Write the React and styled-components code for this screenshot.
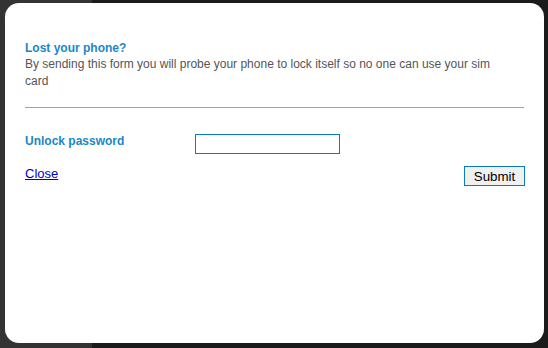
import styled, { createGlobalStyle } from 'styled-components';

const GlobalStyle = createGlobalStyle`
  html, body {
    margin: 0;
    padding: 0;
  }
  body {
    width: 548px;
    height: 348px;
    overflow: hidden;
    background: linear-gradient(to right, #333333 0px, #333333 92px, #1b1b1b 92px, #1b1b1b 100%);
    font-family: "Liberation Sans", Arial, sans-serif;
  }
`;

const Backdrop = styled.div`
  width: 548px;
  height: 348px;
  padding: 3px 4px 5px 5px;
  box-sizing: border-box;
`;

const Modal = styled.div`
  width: 539px;
  height: 340px;
  box-sizing: border-box;
  background: #ffffff;
  border-radius: 14px;
  padding: 38px 20px 0 20px;
  display: flex;
  flex-direction: column;
`;

const Title = styled.div`
  font-size: 12px;
  line-height: 15px;
  font-weight: bold;
  color: #1a87c7;
`;

const Intro = styled.p`
  margin: 0;
  max-width: 484px;
  font-size: 12px;
  line-height: 17px;
  color: #555558;
`;

const Divider = styled.hr`
  margin: 17px 0 0 0;
  border: 0;
  height: 1px;
  background: #a0a0a0;
`;

const FieldRow = styled.div`
  display: flex;
  align-items: flex-start;
  margin-top: 26px;
`;

const Label = styled.label`
  width: 170px;
  font-size: 12px;
  line-height: 15px;
  font-weight: bold;
  color: #1a87c7;
`;

const TextInput = styled.input`
  width: 145px;
  height: 20px;
  box-sizing: border-box;
  margin: 0;
  padding: 0 3px;
  border: 1px solid #0a7bbf;
  background: #fff;
  font-size: 12px;
  outline: none;
`;

const Actions = styled.div`
  display: flex;
  justify-content: space-between;
  align-items: flex-start;
  margin-top: 12px;
`;

const CloseLink = styled.a`
  font-size: 13px;
  line-height: 15px;
  color: #0000cc;
  text-decoration: underline;
  cursor: pointer;
`;

const SubmitButton = styled.button`
  margin: 0 -1px 0 0;
  height: 20px;
  width: 61px;
  box-sizing: border-box;
  padding: 0;
  border: 1px solid #0a7bbf;
  background: #f0f0f0;
  font-family: "Liberation Sans", Arial, sans-serif;
  font-size: 13.33px;
  color: #000;
`;

export default function App() {
  return (
    <>
      <GlobalStyle />
      <Backdrop>
        <Modal>
          <Title>Lost your phone?</Title>
          <Intro>
            By sending this form you will probe your phone to lock itself so no one can use your sim card
          </Intro>
          <Divider />
          <FieldRow>
            <Label htmlFor="unlock">Unlock password</Label>
            <TextInput id="unlock" type="password" />
          </FieldRow>
          <Actions>
            <CloseLink>Close</CloseLink>
            <SubmitButton type="button">Submit</SubmitButton>
          </Actions>
        </Modal>
      </Backdrop>
    </>
  );
}
